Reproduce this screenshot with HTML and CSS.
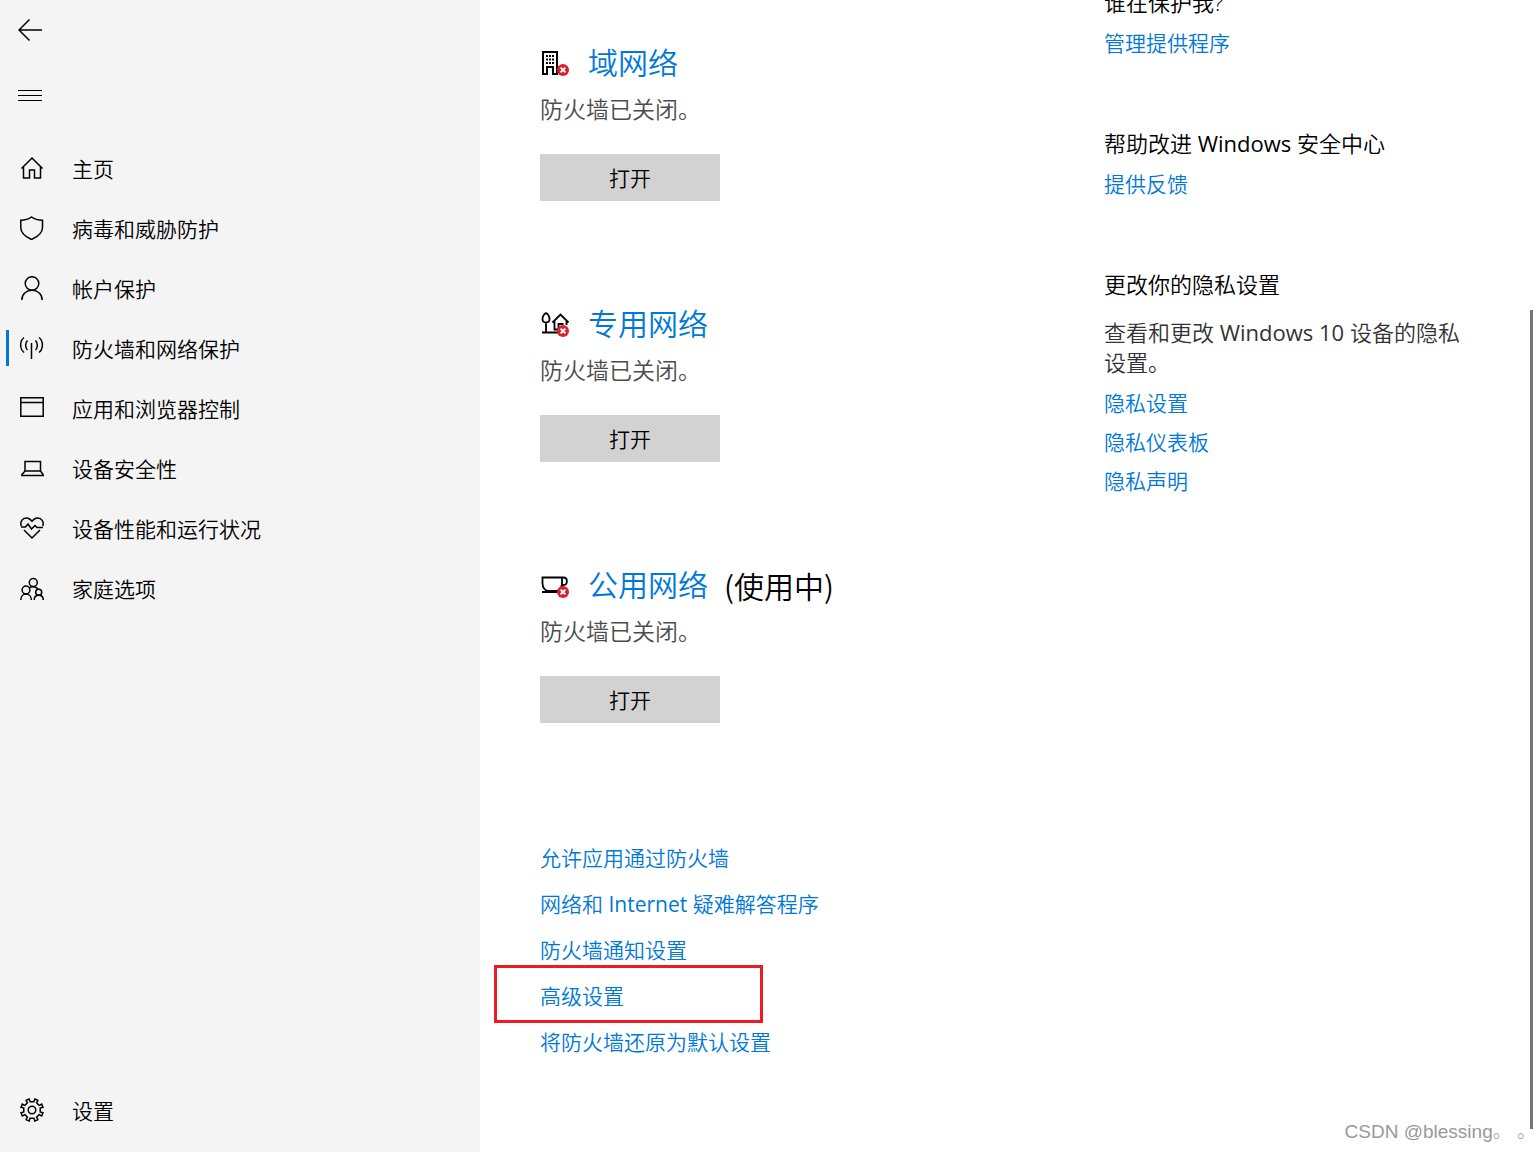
FILE: index.html
```html
<!DOCTYPE html>
<html lang="zh-CN">
<head>
<meta charset="UTF-8" />
<meta name="viewport" content="width=device-width, initial-scale=1" />
<title>Windows 安全中心</title>
<link rel="stylesheet" href="styles.css">
</head>
<body>

<!-- Cross badge shared by the network icons -->
<svg class="defs" width="0" height="0" aria-hidden="true">
  <symbol id="badge" viewBox="0 0 12 12">
    <circle cx="6" cy="6" r="6" fill="#d9212c" stroke="none" />
    <path d="M3.600 3.600l4.800 4.800M8.400 3.600L3.600 8.400" stroke="#fff" stroke-width="2" fill="none" />
  </symbol>
</svg>

<div class="app">
  <div class="sidebar">
    <button class="icon-button" aria-label="返回">
      <svg class="icon" viewBox="0 0 24 24"><path d="M24 12H1M11.500 1.500L1 12l10.500 10.500" /></svg>
    </button>
    <button class="icon-button menu-button" aria-label="菜单">
      <svg class="icon crisp" viewBox="0 0 24 24"><path d="M0 7.500h24M0 12.500h24M0 17.500h24" /></svg>
    </button>

    <nav class="nav">
      <a class="nav-item" href="#">
        <svg class="icon" viewBox="0 0 24 24"><path d="M1.500 12.500L12 2l10.500 10.500M3.500 11v11h6v-8h5v8h6V11" /></svg>
        <span>主页</span>
      </a>
      <a class="nav-item" href="#">
        <svg class="icon" viewBox="0 0 24 24"><path d="M11.500 1C8.500 3.200 4.500 4.200 .8 4.200v7.300c0 5.500 5 9.500 10.700 12 5.700-2.500 11-6.500 11-12V4.200C18.500 4.200 14.500 3.200 11.500 1z" /></svg>
        <span>病毒和威胁防护</span>
      </a>
      <a class="nav-item" href="#">
        <svg class="icon" viewBox="0 0 24 24"><circle cx="12" cy="7.500" r="6.800" /><path d="M1.800 24c0-5.800 4.500-9.700 10.200-9.700S22.200 18.200 22.200 24" /></svg>
        <span>帐户保护</span>
      </a>
      <a class="nav-item current" href="#" aria-current="page">
        <svg class="icon" viewBox="0 0 24 24"><path d="M11.500 7v16M7.500 4.500c-2.500 2.500-2.500 7 0 9.500M15.500 4.500c2.500 2.500 2.500 7 0 9.500M4 1.500C-.5 5-.5 13 4 16.500M19 1.500c4.500 3.500 4.500 11.500 0 15" /></svg>
        <span>防火墙和网络保护</span>
      </a>
      <a class="nav-item" href="#">
        <svg class="icon" viewBox="0 0 24 24"><path d="M.8 1.800h22.400v18.400H.8zM.8 6.500h22.400" /></svg>
        <span>应用和浏览器控制</span>
      </a>
      <a class="nav-item" href="#">
        <svg class="icon" viewBox="0 0 24 24"><path d="M5 5.500h15.500v9.500H5zM5 15l-3.200 3.800v.7h21.400v-.7L20.500 15" /></svg>
        <span>设备安全性</span>
      </a>
      <a class="nav-item" href="#">
        <svg class="icon" viewBox="0 0 24 24"><path d="M1.300 10C-.3 5.500 2.500 2 6.300 2 9 2 10.700 3.500 12 5.200 13.300 3.500 15 2 17.700 2c3.800 0 6.600 3.500 5 8M1 11h4.500L8 8l3.500 5 3.500-3.500 2 2h6M4 14l8 8 8-8" /></svg>
        <span>设备性能和运行状况</span>
      </a>
      <a class="nav-item" href="#">
        <svg class="icon" viewBox="0 0 24 24"><circle cx="13.300" cy="6.500" r="4" /><circle cx="6" cy="14" r="3.900" /><circle cx="18.700" cy="16.300" r="3" /><path d="M.8 24c0-3.500 2.200-5.900 5.200-5.900s5.400 2.400 5.400 5.900M14.200 24c0-3 1.900-4.700 4.500-4.700s4.500 1.700 4.500 4.700M9.500 11.500c1.800-1 3.500-1 5.500-.5 1.500.7 2.500 1.400 3.200 2.300" /></svg>
        <span>家庭选项</span>
      </a>
    </nav>

    <a class="nav-item" href="#">
      <svg class="icon" viewBox="0 0 24 24"><circle cx="12" cy="12" r="3.800" /><path d="M9.200 1l.9 2.800h3.800L14.800 1l3.100 1.300-1.300 2.600 2.500 2.500 2.600-1.300L23 9.200l-2.800.9v3.800l2.800.9-1.300 3.100-2.600-1.300-2.500 2.500 1.300 2.600-3.100 1.300-.9-2.800h-3.800L9.200 23l-3.100-1.300 1.300-2.600-2.500-2.500-2.600 1.300L1 14.800l2.800-.9v-3.800L1 9.200l1.300-3.100 2.600 1.300 2.500-2.500-1.300-2.600z" /></svg>
      <span>设置</span>
    </a>
  </div>

  <main class="main">
    <div class="content">
      <section class="network">
        <h2 class="network-title">
          <svg class="network-icon" viewBox="0 0 30 28">
            <path d="M3 3h14v22h-4v-7H7v7H3z" />
            <path class="windows" d="M6 7h8M6 10.500h8M6 14h8" />
            <use href="#badge" x="17" y="15" width="12" height="12" />
          </svg>
          <a href="#">域网络</a>
        </h2>
        <p class="status">防火墙已关闭。</p>
        <button class="action">打开</button>
      </section>

      <section class="network">
        <h2 class="network-title">
          <svg class="network-icon thin" viewBox="0 0 30 28">
            <path d="M6 3C3.500 4.500 2.500 6.500 2.500 9S4 12.500 6 12.500 9.500 11.500 9.500 9 8.500 4.500 6 3zM6 12.500V22M2 22.500h17" />
            <path d="M12.500 12.500L20.500 4.500l8 8M14.500 11v8.500H18M26.500 10.500V15M18.500 19v-5h5" />
            <use href="#badge" x="17" y="15" width="12" height="12" />
          </svg>
          <a href="#">专用网络</a>
        </h2>
        <p class="status">防火墙已关闭。</p>
        <button class="action">打开</button>
      </section>

      <section class="network">
        <h2 class="network-title">
          <svg class="network-icon thin" viewBox="0 0 30 28">
            <path d="M2.500 6.500H22v6c0 4-3 7.500-6 7.500H9c-4 0-6.500-3.500-6.500-7.500zM22 6.500h1.500c4.500 0 4.500 7.500 0 7.500H22M2 21h17" />
            <use href="#badge" x="17" y="15" width="12" height="12" />
          </svg>
          <a href="#">公用网络</a>
          <span class="in-use">(使用中)</span>
        </h2>
        <p class="status">防火墙已关闭。</p>
        <button class="action">打开</button>
      </section>

      <ul class="links">
        <li><a href="#">允许应用通过防火墙</a></li>
        <li><a href="#">网络和 <span lang="en">Internet</span> 疑难解答程序</a></li>
        <li><a href="#">防火墙通知设置</a></li>
        <li class="marked"><a href="#">高级设置</a></li>
        <li><a href="#">将防火墙还原为默认设置</a></li>
      </ul>
    </div>

    <aside class="help">
      <section class="help-group">
        <h3>谁在保护我?</h3>
        <a href="#">管理提供程序</a>
      </section>
      <section class="help-group">
        <h3>帮助改进 <span lang="en">Windows</span> 安全中心</h3>
        <a href="#">提供反馈</a>
      </section>
      <section class="help-group">
        <h3>更改你的隐私设置</h3>
        <p>查看和更改 <span lang="en">Windows 10</span> 设备的隐私设置。</p>
        <a href="#">隐私设置</a>
        <a href="#">隐私仪表板</a>
        <a href="#">隐私声明</a>
      </section>
    </aside>
  </main>

  <div class="scroll-thumb"></div>
  <div class="watermark">CSDN @blessing。 。</div>
</div>

</body>
</html>
```
FILE: styles.css
```css
*, *::before, *::after {
  box-sizing: border-box;
}
body {
  margin: 0;
  background: #fff;
  color: #000;
  font-family: "Open Sans", "Noto Sans CJK SC", sans-serif;
  font-size: 21px;
  font-weight: 350;
  line-height: 30px;
}
h2, h3, p, ul {
  margin: 0;
  padding: 0;
  font-weight: inherit;
}
a {
  color: #0078d7;
  text-decoration: none;
}
button {
  border: none;
  font: inherit;
  color: inherit;
  cursor: pointer;
}
[lang="en"] {
  font-weight: 400;
}
.defs {
  position: absolute;
}
.app {
  position: relative;
  display: flex;
  min-height: 100vh;
  overflow: hidden;
}

/* Sidebar */
.sidebar {
  display: flex;
  flex-direction: column;
  flex: 0 0 480px;
  padding-bottom: 11px;
  background: #f4f4f4;
}
.icon {
  flex: none;
  width: 24px;
  height: 24px;
  fill: none;
  stroke: #000;
  stroke-width: 1.5;
}
.crisp {
  stroke-width: 1;
  shape-rendering: crispEdges;
}
.icon-button {
  display: flex;
  align-items: center;
  width: 60px;
  height: 60px;
  padding: 0 18px;
  background: none;
}
.menu-button {
  margin-top: 5px;
}
.nav {
  flex: 1;
  margin-top: 14px;
}
.nav-item {
  display: flex;
  align-items: center;
  gap: 28px;
  height: 60px;
  padding-left: 20px;
  color: #000;
}
.nav-item .icon {
  margin-bottom: 2px;
}
.current {
  position: relative;
}
.current::before {
  content: "";
  position: absolute;
  left: 6px;
  top: 11px;
  width: 3px;
  height: 36px;
  background: #0078d7;
}

/* Firewall page */
.main {
  display: flex;
  flex: 1;
  padding: 0 60px;
}
.content {
  flex: 1;
  padding-top: 43px;
}
.network {
  margin-bottom: 103px;
}
.network-title {
  display: flex;
  align-items: center;
  gap: 16px;
  font-size: 30px;
  line-height: 40px;
}
.network-icon {
  width: 30px;
  height: 28px;
  margin-right: 2px;
  fill: none;
  stroke: #000;
  stroke-width: 2;
}
.thin {
  stroke-width: 1.8;
}
.windows {
  stroke-dasharray: 2 1;
}
.in-use {
  font-family: "Noto Sans CJK SC", sans-serif;
}
.status {
  margin-top: 11px;
  color: #4c4c4c;
  font-size: 23px;
}
.action {
  display: block;
  width: 180px;
  height: 47px;
  margin-top: 30px;
  background: #d2d2d2;
}
.links {
  display: flex;
  flex-direction: column;
  gap: 16px;
  margin-top: 120px;
  list-style: none;
}
.marked {
  position: relative;
}
.marked::after {
  content: "";
  position: absolute;
  left: -46px;
  top: -16px;
  width: 269px;
  height: 58px;
  border: 3px solid #ed1c24;
  pointer-events: none;
}

/* Help column, scrolled slightly past its first heading */
.help {
  flex: 0 0 372px;
  margin-top: -13px;
}
.help-group {
  display: flex;
  flex-direction: column;
  align-items: flex-start;
  gap: 9px;
  margin-bottom: 70px;
}
.help h3 {
  margin-bottom: 2px;
  font-size: 22px;
}
.help p {
  margin: 7px 0 2px;
  color: #333;
  font-size: 22px;
}

.scroll-thumb {
  position: absolute;
  right: 3px;
  top: 310px;
  bottom: 23px;
  width: 3px;
  background: #767676;
}
.watermark {
  position: absolute;
  right: 0;
  bottom: 5px;
  color: #999;
  font-family: "Liberation Sans", "Noto Sans CJK SC", sans-serif;
  font-size: 19px;
  font-weight: 300;
}
```
